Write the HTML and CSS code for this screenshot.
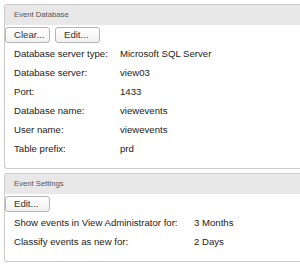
FILE: index.html
```html
<html>
  <head>
    <meta charset="UTF-8">
    <title>Events Configuration</title>
    <link rel="stylesheet" href="styles.css">
  </head>
  <body>
    <div class="panel">
      <div class="panel-header">Event Database</div>
      <div class="panel-buttons">
        <span class="button">Clear...</span>
        <span class="button">Edit...</span>
      </div>
      <div class="panel-rows db-rows">
        <div class="row"><span class="label">Database server type:</span><span>Microsoft SQL Server</span></div>
        <div class="row"><span class="label">Database server:</span><span>view03</span></div>
        <div class="row"><span class="label">Port:</span><span>1433</span></div>
        <div class="row"><span class="label">Database name:</span><span>viewevents</span></div>
        <div class="row"><span class="label">User name:</span><span>viewevents</span></div>
        <div class="row"><span class="label">Table prefix:</span><span>prd</span></div>
      </div>
    </div>

    <div class="panel">
      <div class="panel-header">Event Settings</div>
      <div class="panel-buttons">
        <span class="button">Edit...</span>
      </div>
      <div class="panel-rows settings-rows">
        <div class="row"><span class="label">Show events in View Administrator for:</span><span>3 Months</span></div>
        <div class="row"><span class="label">Classify events as new for:</span><span>2 Days</span></div>
      </div>
    </div>
  </body>
</html>
```

FILE: styles.css
```css
body {
  margin: 0;
  padding: 4px 0 0 4px;
  background-color: white;
  font-family: "Liberation Sans", Arial, sans-serif;
  font-size: 9.6px;
  color: #222;
  overflow: hidden;
}

.panel {
  width: 300px;
  border: 1px solid #cbcbcb;
  border-right: none;
  border-radius: 3px 0 0 3px;
  margin-bottom: 4px;
  background-color: white;
}

.panel-header {
  height: 20px;
  line-height: 20px;
  padding-left: 9px;
  background-color: #e8e8e8;
  font-size: 7.7px;
  color: #555;
  white-space: nowrap;
}

.panel-buttons {
  display: flex;
  gap: 5px;
  margin-top: 2px;
}

.button {
  width: 45px;
  height: 16px;
  line-height: 14px;
  padding-left: 8px;
  box-sizing: border-box;
  border: 1px solid #b5b5b5;
  border-radius: 3px;
  background: linear-gradient(#ffffff, #f1f1f1);
  color: #333;
  white-space: nowrap;
}

.panel-rows {
  padding: 1px 0 10px 9px;
}

.row {
  height: 19px;
  display: flex;
  align-items: center;
  white-space: nowrap;
}

.label {
  flex-shrink: 0;
}

.db-rows .label {
  width: 106px;
}

.settings-rows .label {
  width: 180px;
}
```
